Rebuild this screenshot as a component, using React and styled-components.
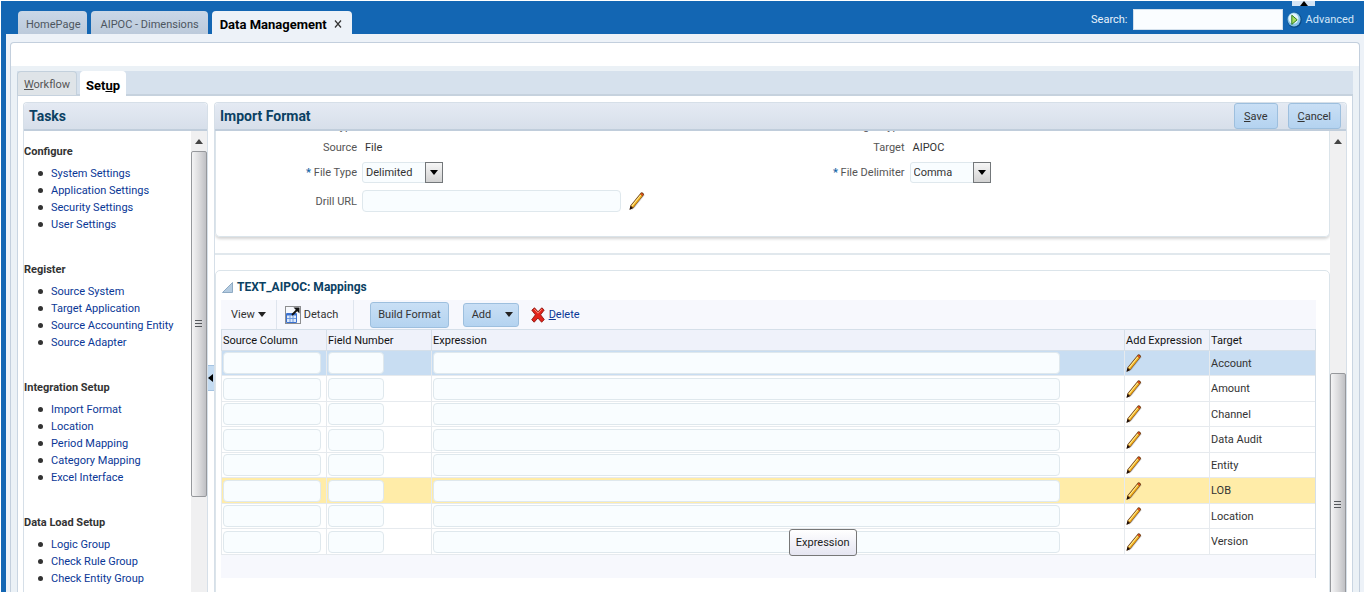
import styled, { createGlobalStyle, css } from 'styled-components';

const GlobalStyle = createGlobalStyle`
  * {
    box-sizing: border-box;
  }
  body {
    margin: 0;
    background: #fff;
    overflow: hidden;
  }
  body, button, input, select {
    font-family: Roboto, 'Liberation Sans', sans-serif;
    font-size: 11px;
    line-height: 17px;
    color: #333;
  }
  h1, h2, h3, ul {
    margin: 0;
    padding: 0;
    font-size: 11px;
  }
  a {
    color: #0a3796;
    text-decoration: none;
  }
`;

const Page = styled.div`
  display: flex;
  flex-direction: column;
  height: 100vh;
  padding: 1px;
`;

// top bar
const TopBar = styled.header`
  position: relative;
  display: flex;
  justify-content: space-between;
  align-items: flex-end;
  flex: none;
  height: 33px;
  padding: 0 10px 0 17px;
  background: #1366b3;
`;
const PageTabs = styled.nav`
  display: flex;
  gap: 4px;
`;
const PageTab = styled.button`
  height: 23px;
  padding: 4px 7px 0 8px;
  border: none;
  border-radius: 4px 4px 0 0;
  background: linear-gradient(#c9d7e7, #bccadb);
  color: #4d5660;
  white-space: nowrap;
  ${({ $wide }) => $wide && 'padding: 4px 9px 0;'}
  ${({ $active }) =>
    $active &&
    css`
      padding: 4px 8px 0;
      background: #edf2f8;
      color: #000;
      font-size: 13px;
      font-weight: bold;
    `}
`;
const CloseMark = styled.svg`
  margin: 0 2px 3px 7px;
  vertical-align: middle;
`;
const SearchForm = styled.form`
  display: flex;
  align-items: center;
  height: 29px;
  color: #e8f2fb;
  label {
    margin-right: 5px;
  }
  a {
    color: #d3e7f8;
    margin-left: 4px;
  }
`;
const SearchInput = styled.input`
  width: 150px;
  height: 21px;
  margin-right: 4px;
  border: 1px solid #d3e0ec;
  background: #fafdff;
`;
const GoButton = styled.button`
  display: flex;
  padding: 0;
  border: none;
  background: none;
`;
const CollapseTab = styled.button`
  position: absolute;
  top: 0;
  right: 49px;
  display: flex;
  justify-content: center;
  width: 23px;
  height: 5px;
  padding: 0;
  border: none;
  background: #d4e4f4;
`;

// frame under the bar
const Frame = styled.div`
  display: flex;
  flex: 1;
  min-height: 0;
  border-left: 5px solid #1366b3;
`;
const FrameInner = styled.div`
  display: flex;
  flex: 1;
  min-width: 0;
  padding: 8px 4px 0 4px;
  background: #edf2f8;
`;
const Window = styled.div`
  display: flex;
  flex-direction: column;
  flex: 1;
  min-width: 0;
  border: 1px solid #c3cfdd;
  border-bottom: none;
  border-radius: 4px 4px 0 0;
  background: #ebf1f6;
`;
const BlankStrip = styled.div`
  flex: none;
  height: 23px;
  border-radius: 4px 4px 0 0;
  background: #fff;
`;
const WindowBody = styled.div`
  display: flex;
  flex-direction: column;
  flex: 1;
  min-height: 0;
  padding: 5px 6px 0 6px;
`;
const SubTabs = styled.nav`
  display: flex;
  gap: 3px;
  flex: none;
  height: 25px;
  border-bottom: 2px solid #c6d2de;
  background: #d6e1ed;
`;
const SubTab = styled.button`
  height: 24px;
  padding: 2px 6px 0;
  border: 1px solid #c3d0dc;
  border-bottom: none;
  border-radius: 4px 4px 0 0;
  background: #dfe4e8;
  color: #555;
  ${({ $active }) =>
    $active &&
    css`
      height: 25px;
      padding: 2px 5px 0;
      border-color: #fff;
      background: #fff;
      color: #000;
      font-size: 13px;
      font-weight: bold;
    `}
`;
const Columns = styled.div`
  display: flex;
  flex: 1;
  min-height: 0;
  padding: 6px 5px 0;
  border: 1px solid #c9d5e2;
  border-width: 0 1px;
  background: #fff;
`;

// panes
const Pane = styled.section`
  display: flex;
  flex-direction: column;
  width: 185px;
  border: 1px solid #d6dfe8;
  border-bottom: none;
  border-radius: 4px 4px 0 0;
  ${({ $main }) =>
    $main &&
    css`
      flex: 1;
      width: auto;
      min-width: 0;
    `}
`;
const PaneHeader = styled.div`
  display: flex;
  align-items: center;
  flex: none;
  gap: 10px;
  height: 28px;
  padding: 0 5px 0 5px;
  border-bottom: 2px solid #c0cddb;
  border-radius: 4px 4px 0 0;
  background: linear-gradient(#e4eaf3, #d7dfea);
  h2 {
    flex: 1;
    color: #0b4163;
    font-size: 14px;
  }
`;
const PaneBody = styled.div`
  display: flex;
  flex: 1;
  min-height: 0;
  overflow: hidden;
`;
const PaneContent = styled.div`
  flex: 1;
  min-width: 0;
  overflow: hidden;
`;
const Splitter = styled.div`
  display: flex;
  align-items: center;
  width: 6px;
  padding-top: 62px;
`;
const SplitterHandle = styled.button`
  display: flex;
  align-items: center;
  width: 6px;
  height: 26px;
  padding: 0;
  border: 1px solid #a5c4e2;
  border-width: 1px 0 1px 0;
  background: #c5dcf2;
`;

const Button = styled.button`
  height: 26px;
  padding: 0 7px;
  border: 1px solid #9dbfde;
  border-radius: 3px;
  background: linear-gradient(#c9dff5, #b4d3f0);
  white-space: nowrap;
  ${PaneHeader} & {
    padding: 0 9px;
  }
`;

// tasks
const TaskGroup = styled.div`
  padding-bottom: 28px;
  h3 {
    margin-bottom: 5px;
    line-height: 17px;
  }
  ul {
    padding-left: 27px;
    list-style: none;
  }
  li {
    display: flex;
    align-items: center;
    line-height: 17px;
    white-space: nowrap;
  }
  li::before {
    content: '';
    width: 5px;
    height: 5px;
    margin: 0 8px 0 -13px;
    border-radius: 50%;
    background: #333;
  }
`;
const TaskList = styled.div`
  padding-top: 12px;
`;

// scroll bars
const Track = styled.div`
  display: flex;
  flex-direction: column;
  width: 16px;
  overflow: hidden;
  background: #f0f0f1;
`;
const TrackArrow = styled.div`
  display: flex;
  justify-content: center;
  align-items: center;
  flex: none;
  height: 20px;
`;
const Thumb = styled.div`
  display: flex;
  justify-content: center;
  align-items: center;
  flex: none;
  height: ${({ $size }) => $size};
  margin-top: ${({ $start }) => $start || 0}px;
  border: 1px solid #96989c;
  border-radius: 2px;
  background: linear-gradient(90deg, #f4f4f5, #dcdcde 50%, #bfc0c4);
`;

// source and target details
const DetailsCard = styled.div`
  display: flow-root;
  height: 106px;
  border: 1px solid #dbe4ea;
  border-top: none;
  border-radius: 0 0 5px 5px;
  box-shadow: 0 2px 3px #d5d5d5;
`;
const DetailsGrid = styled.div`
  display: grid;
  grid-template-columns: 1fr 1fr;
  margin-top: -14px;
  padding-right: 18px;
`;
const FieldRow = styled.div`
  display: flex;
  align-items: center;
  height: ${({ $height }) => $height || 25}px;
`;
const FieldLabel = styled.label`
  width: 141px;
  margin-right: 5px;
  color: #555;
  text-align: right;
  b {
    color: #1766a6;
  }
`;
const FieldValue = styled.span`
  padding-left: 3px;
`;
const SelectBox = styled.span`
  position: relative;
  display: flex;
  width: 81px;
`;
const Select = styled.select`
  appearance: none;
  width: 100%;
  height: 21px;
  padding: 0 3px;
  border: 1px solid #dfe8ed;
  border-radius: 3px;
  background: #f9fdff;
`;
const SelectArrow = styled.span`
  position: absolute;
  top: 0;
  right: 0;
  display: flex;
  justify-content: center;
  align-items: center;
  width: 18px;
  height: 21px;
  border: 1px solid #73777a;
  background: linear-gradient(#f6f6f6, #d2d2d2);
  pointer-events: none;
`;
const TextInput = styled.input`
  display: block;
  width: ${({ $width }) => $width};
  height: 22px;
  border: 1px solid #dfe8ed;
  border-radius: 4px;
  background: #f9fdff;
`;
const IconButton = styled.button`
  display: flex;
  padding: 0;
  border: none;
  background: none;
  ${TextInput} + & {
    margin-left: 8px;
  }
`;
const Divider = styled.hr`
  margin: 16px 0 15px;
  border: none;
  border-top: 2px solid #e1e8ed;
`;

// mappings
const MappingsCard = styled.div`
  height: 400px;
  padding: 8px 13px 0 5px;
  border: 1px solid #dbe4ea;
  border-radius: 5px 5px 0 0;
`;
const MappingsTitle = styled.h3`
  display: flex;
  align-items: center;
  gap: 4px;
  margin-bottom: 4px;
  padding-left: 1px;
  color: #0b4163;
  font-size: 12px;
`;
const Toolbar = styled.div`
  display: flex;
  align-items: center;
  height: 29px;
  background: #f7f8fd;
`;
const ToolItem = styled.button`
  display: flex;
  align-items: center;
  gap: 3px;
  height: 29px;
  padding: 0 10px;
  border: none;
  background: none;
  ${({ $divided }) => $divided && 'border-right: 1px solid #dfe5ee;'}
  ${({ $detach }) => $detach && 'padding: 0 15px 0 8px; margin-right: 16px;'}
`;
const AddButton = styled(Button)`
  display: flex;
  justify-content: space-between;
  align-items: center;
  width: 56px;
  height: 24px;
  margin: 0 12px 0 14px;
  padding: 0 5px 0 8px;
`;
const DeleteLink = styled.a`
  display: flex;
  align-items: center;
  gap: 4px;
`;
const Table = styled.table`
  width: 100%;
  border-collapse: separate;
  border-spacing: 0;
  table-layout: fixed;
  border-right: 1px solid #d5dfe9;
  th {
    height: 22px;
    padding: 0 1px;
    border: 1px solid #d5dfe9;
    border-width: 1px 0 1px 1px;
    background: #eff2fa;
    color: #111;
    font-weight: normal;
    text-align: left;
    white-space: nowrap;
  }
`;
const Col = styled.col`
  width: ${({ $width }) => $width};
`;
const Row = styled.tr`
  height: 25px;
  background: ${({ $background }) => $background || '#fff'};
  &:nth-child(even) {
    height: 26px;
  }
  td {
    position: relative;
    padding: 0 1px;
    border: 1px solid #e6eaee;
    border-width: 0 0 1px 1px;
  }
`;
const Tooltip = styled.span`
  position: absolute;
  top: 0;
  left: calc(52% - 3px);
  padding: 4px 6px;
  border: 1px solid #777;
  border-radius: 3px;
  background: linear-gradient(#fff, #e5e5f1);
  color: #222;
`;
const TableFooter = styled.div`
  height: 23px;
  border-right: 1px solid #d5dfe9;
  background: #f7f8fd;
`;

const Caret = ({ up, color = '#222' }) => (
  <svg width='8' height='5' viewBox='0 0 8 5'>
    <path d={up ? 'M0 5L4 0L8 5Z' : 'M0 0H8L4 5Z'} fill={color} />
  </svg>
);

const Pencil = () => (
  <svg width='16' height='20' viewBox='0 0 16 20'>
    <path d='M2 19.5L5.5 17L15.8 4L14.5 3L4 16Z' fill='#888' opacity='.35' />
    <path d='M.6 18.8L1.4 14.6L12 1.6Q13.5 .6 14.8 2.8L15 3.8L4.3 17Z' fill='#6e3d10' />
    <path d='M2.3 14.8L11.5 3.4L13.4 5L4.1 16.4Z' fill='#f0ab1b' />
    <path d='M2.3 14.8L11.5 3.4L12.3 4.1L3.1 15.4Z' fill='#fff09a' />
    <path d='M11.6 3.2L12.6 2.1L14.3 3.6L13.5 4.8Z' fill='#f0521c' />
    <path d='M.6 18.8L1.3 15.2L3.8 17.2Z' fill='#1c100a' />
  </svg>
);

const Grip = () => (
  <svg width='8' height='9' viewBox='0 0 8 9'>
    <path d='M0 1.5H7M0 4.5H7M0 7.5H7' stroke='#55585c' />
  </svg>
);

const DetachIcon = () => (
  <svg width='16' height='18' viewBox='0 0 16 18'>
    <rect x='.5' y='.5' width='15' height='17' fill='#f7f9fd' stroke='#222' strokeDasharray='1 1' />
    <rect x='1' y='7' width='11' height='10' rx='1' fill='#3c72d0' />
    <path d='M2 9.5H11V16H2Z' fill='#dfeafa' />
    <path d='M2 12.5H11M5 9.5V16M8 9.5V16' stroke='#6c99e0' />
    <path d='M7 9L12 4' stroke='#111' strokeWidth='1.8' />
    <path d='M8.5 1.5H14.5V7.5Z' fill='#111' />
  </svg>
);

const DeleteIcon = () => (
  <svg width='14' height='16' viewBox='0 0 14 16'>
    <path
      d='M3.5 .8L7 4.8L10.8 .8L13.2 3L9.6 7.8L13.3 12.6L10.6 15.2L6.9 11L3.2 15.2L.7 12.8L4.4 7.8L.8 3.2Z'
      fill='#e3231b'
      stroke='#8d1610'
      strokeWidth='.9'
    />
    <path d='M3.3 2.2L7 6.2L10.8 2.2' fill='none' stroke='#ff8a76' />
  </svg>
);

const GoIcon = () => (
  <svg width='15' height='16' viewBox='0 0 15 16'>
    <ellipse cx='7.5' cy='8' rx='7.2' ry='7.7' fill='#0b4a86' />
    <ellipse cx='7' cy='7.5' rx='6.5' ry='7' fill='#86c3e8' />
    <ellipse cx='6.5' cy='6.5' rx='5' ry='5.2' fill='#e2f3fb' />
    <path d='M4.8 3.2L10.2 7.8L4.8 12.4Z' fill='#a6dc5c' stroke='#2d7d1e' />
  </svg>
);

const tasks = [
  {
    title: 'Configure',
    links: ['System Settings', 'Application Settings', 'Security Settings', 'User Settings'],
  },
  {
    title: 'Register',
    links: ['Source System', 'Target Application', 'Source Accounting Entity', 'Source Adapter'],
  },
  {
    title: 'Integration Setup',
    links: ['Import Format', 'Location', 'Period Mapping', 'Category Mapping', 'Excel Interface'],
  },
  {
    title: 'Data Load Setup',
    links: ['Logic Group', 'Check Rule Group', 'Check Entity Group'],
  },
];

const mappings = [
  { target: 'Account', background: '#c8ddf2' },
  { target: 'Amount' },
  { target: 'Channel' },
  { target: 'Data Audit' },
  { target: 'Entity' },
  { target: 'LOB', background: '#ffeca8' },
  { target: 'Location' },
  { target: 'Version', tooltip: 'Expression' },
];

function ScrollBar({ size, start }) {
  return (
    <Track>
      <TrackArrow>
        <Caret up color='#444' />
      </TrackArrow>
      <Thumb $size={size} $start={start}>
        <Grip />
      </Thumb>
    </Track>
  );
}

function SelectField({ id, value }) {
  return (
    <SelectBox>
      <Select id={id} defaultValue={value}>
        <option>{value}</option>
      </Select>
      <SelectArrow>
        <Caret color='#000' />
      </SelectArrow>
    </SelectBox>
  );
}

function TasksPane() {
  return (
    <Pane>
      <PaneHeader>
        <h2>Tasks</h2>
      </PaneHeader>
      <PaneBody>
        <PaneContent>
          <TaskList>
            {tasks.map(({ title, links }) => (
              <TaskGroup key={title}>
                <h3>{title}</h3>
                <ul>
                  {links.map((link) => (
                    <li key={link}>
                      <a href='#'>{link}</a>
                    </li>
                  ))}
                </ul>
              </TaskGroup>
            ))}
          </TaskList>
        </PaneContent>
        <ScrollBar size='75%' />
      </PaneBody>
    </Pane>
  );
}

function Details() {
  return (
    <DetailsCard>
      {/* the type row is scrolled half under the header */}
      <DetailsGrid>
        <FieldRow $height={18}>
          <FieldLabel as='span'>Type</FieldLabel>
        </FieldRow>
        <FieldRow $height={18}>
          <FieldLabel as='span'>Target Type</FieldLabel>
        </FieldRow>
        <FieldRow>
          <FieldLabel as='span'>Source</FieldLabel>
          <FieldValue>File</FieldValue>
        </FieldRow>
        <FieldRow>
          <FieldLabel as='span'>Target</FieldLabel>
          <FieldValue>AIPOC</FieldValue>
        </FieldRow>
        <FieldRow>
          <FieldLabel htmlFor='file-type'>
            <b>*</b> File Type
          </FieldLabel>
          <SelectField id='file-type' value='Delimited' />
        </FieldRow>
        <FieldRow>
          <FieldLabel htmlFor='delimiter'>
            <b>*</b> File Delimiter
          </FieldLabel>
          <SelectField id='delimiter' value='Comma' />
        </FieldRow>
        <FieldRow $height={32}>
          <FieldLabel htmlFor='drill-url'>Drill URL</FieldLabel>
          <TextInput id='drill-url' $width='259px' />
          <IconButton aria-label='Edit'>
            <Pencil />
          </IconButton>
        </FieldRow>
      </DetailsGrid>
    </DetailsCard>
  );
}

function Mappings() {
  return (
    <MappingsCard>
      <MappingsTitle>
        <svg width='11' height='11' viewBox='0 0 11 11'>
          <path d='M.5 10.5H10.5V.5Z' fill='#b4cbe0' stroke='#8fabc4' />
        </svg>
        TEXT_AIPOC: Mappings
      </MappingsTitle>
      <Toolbar>
        <ToolItem $divided>
          View <Caret />
        </ToolItem>
        <ToolItem $divided $detach>
          <DetachIcon /> Detach
        </ToolItem>
        <Button>Build Format</Button>
        <AddButton>
          Add <Caret />
        </AddButton>
        <DeleteLink href='#'>
          <DeleteIcon />
          <span>
            <u>D</u>elete
          </span>
        </DeleteLink>
      </Toolbar>
      <Table>
        <colgroup>
          <Col $width='105px' />
          <Col $width='105px' />
          <Col />
          <Col $width='85px' />
          <Col $width='106px' />
        </colgroup>
        <thead>
          <tr>
            <th>Source Column</th>
            <th>Field Number</th>
            <th>Expression</th>
            <th>Add Expression</th>
            <th>Target</th>
          </tr>
        </thead>
        <tbody>
          {mappings.map(({ target, background, tooltip }) => (
            <Row key={target} $background={background}>
              <td>
                <TextInput aria-label={`${target} source column`} $width='98px' />
              </td>
              <td>
                <TextInput aria-label={`${target} field number`} $width='56px' />
              </td>
              <td>
                <TextInput aria-label={`${target} expression`} $width='calc(100% - 63px)' />
                {tooltip && <Tooltip>{tooltip}</Tooltip>}
              </td>
              <td>
                <IconButton aria-label='Add expression'>
                  <Pencil />
                </IconButton>
              </td>
              <td>{target}</td>
            </Row>
          ))}
        </tbody>
      </Table>
      <TableFooter />
    </MappingsCard>
  );
}

function App() {
  return (
    <Page>
      <GlobalStyle />
      <TopBar>
        <PageTabs>
          <PageTab>HomePage</PageTab>
          <PageTab $wide>AIPOC - Dimensions</PageTab>
          <PageTab $active>
            Data Management
            <CloseMark width='8' height='8' viewBox='0 0 8 8'>
              <path d='M1 .5L7 7.5M7 .5L1 7.5' stroke='#333' strokeWidth='1.2' />
            </CloseMark>
          </PageTab>
        </PageTabs>
        <SearchForm>
          <label htmlFor='search'>Search:</label>
          <SearchInput id='search' />
          <GoButton type='button' aria-label='Go'>
            <GoIcon />
          </GoButton>
          <a href='#'>Advanced</a>
        </SearchForm>
        <CollapseTab aria-label='Collapse'>
          <Caret up color='#000' />
        </CollapseTab>
      </TopBar>
      <Frame>
        <FrameInner>
          <Window>
            <BlankStrip />
            <WindowBody>
              <SubTabs>
                <SubTab>
                  <u>W</u>orkflow
                </SubTab>
                <SubTab $active>
                  Set<u>u</u>p
                </SubTab>
              </SubTabs>
              <Columns>
                <TasksPane />
                <Splitter>
                  <SplitterHandle aria-label='Collapse tasks'>
                    <svg width='5' height='8' viewBox='0 0 5 8'>
                      <path d='M5 0V8L0 4Z' fill='#000' />
                    </svg>
                  </SplitterHandle>
                </Splitter>
                <Pane $main>
                  <PaneHeader>
                    <h2>Import Format</h2>
                    <Button>
                      <u>S</u>ave
                    </Button>
                    <Button>
                      <u>C</u>ancel
                    </Button>
                  </PaneHeader>
                  <PaneBody>
                    <PaneContent>
                      <Details />
                      <Divider />
                      <Mappings />
                    </PaneContent>
                    <ScrollBar size='262px' start={222} />
                  </PaneBody>
                </Pane>
              </Columns>
            </WindowBody>
          </Window>
        </FrameInner>
      </Frame>
    </Page>
  );
}

export default App;
